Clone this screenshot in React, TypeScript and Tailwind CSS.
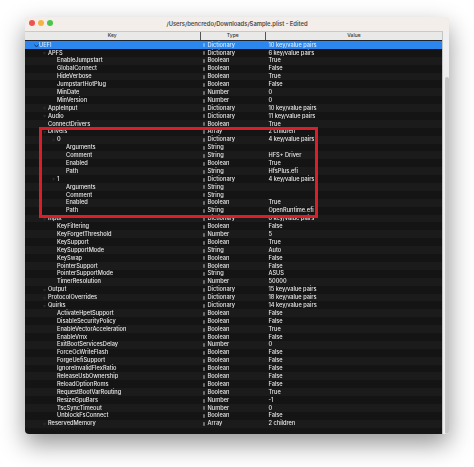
const D = "Dictionary", B = "Boolean", N = "Number", S = "String", A = "Array";
type Row = [string, number, string, string, boolean?];
const rows: Row[] = [
  ["UEFI", 0, D, "10 key/value pairs", true],
  ["APFS", 1, D, "6 key/value pairs", true],
  ["EnableJumpstart", 2, B, "True"],
  ["GlobalConnect", 2, B, "False"],
  ["HideVerbose", 2, B, "True"],
  ["JumpstartHotPlug", 2, B, "False"],
  ["MinDate", 2, N, "0"],
  ["MinVersion", 2, N, "0"],
  ["AppleInput", 1, D, "10 key/value pairs", true],
  ["Audio", 1, D, "11 key/value pairs", true],
  ["ConnectDrivers", 1, B, "True"],
  ["Drivers", 1, A, "2 children", true],
  ["0", 2, D, "4 key/value pairs", true],
  ["Arguments", 3, S, ""],
  ["Comment", 3, S, "HFS+ Driver"],
  ["Enabled", 3, B, "True"],
  ["Path", 3, S, "HfsPlus.efi"],
  ["1", 2, D, "4 key/value pairs", true],
  ["Arguments", 3, S, ""],
  ["Comment", 3, S, ""],
  ["Enabled", 3, B, "True"],
  ["Path", 3, S, "OpenRuntime.efi"],
  ["Input", 1, D, "8 key/value pairs", true],
  ["KeyFiltering", 2, B, "False"],
  ["KeyForgetThreshold", 2, N, "5"],
  ["KeySupport", 2, B, "True"],
  ["KeySupportMode", 2, S, "Auto"],
  ["KeySwap", 2, B, "False"],
  ["PointerSupport", 2, B, "False"],
  ["PointerSupportMode", 2, S, "ASUS"],
  ["TimerResolution", 2, N, "50000"],
  ["Output", 1, D, "15 key/value pairs", true],
  ["ProtocolOverrides", 1, D, "18 key/value pairs", true],
  ["Quirks", 1, D, "14 key/value pairs", true],
  ["ActivateHpetSupport", 2, B, "False"],
  ["DisableSecurityPolicy", 2, B, "False"],
  ["EnableVectorAcceleration", 2, B, "True"],
  ["EnableVmx", 2, B, "False"],
  ["ExitBootServicesDelay", 2, N, "0"],
  ["ForceOcWriteFlash", 2, B, "False"],
  ["ForgeUefiSupport", 2, B, "False"],
  ["IgnoreInvalidFlexRatio", 2, B, "False"],
  ["ReleaseUsbOwnership", 2, B, "False"],
  ["ReloadOptionRoms", 2, B, "False"],
  ["RequestBootVarRouting", 2, B, "True"],
  ["ResizeGpuBars", 2, N, "-1"],
  ["TscSyncTimeout", 2, N, "0"],
  ["UnblockFsConnect", 2, B, "False"],
  ["ReservedMemory", 1, A, "2 children", true],
];

function Updown() {
  return (
    <svg width="2" height="4" viewBox="0 0 4 8" className="shrink-0" fill="currentColor">
      <path d="M2 0 4 3H0zM2 8 0 5h4z" />
    </svg>
  );
}

export default function App() {
  return (
    <div className="h-[467px] w-[474px] overflow-hidden bg-white pl-[25px] pt-[17px] font-['Inter','Liberation_Sans',sans-serif]">
      <div className="relative flex h-[417px] w-[424px] flex-col overflow-hidden rounded-[4px] bg-[#ececec] shadow-[0_10px_24px_rgba(0,0,0,0.42)] blur-[0.3px]">
        <div className="relative flex h-[14px] shrink-0 items-center justify-center bg-[#f4eeea] pt-[1px] text-[5.8px] font-semibold text-[#4a4a4a]">
          <div className="absolute left-[3.5px] top-[2.5px] flex gap-[3px]">
            <span className="h-[6px] w-[6px] rounded-full bg-[#ee544c]" />
            <span className="h-[6px] w-[6px] rounded-full bg-[#f3b53f]" />
            <span className="h-[6px] w-[6px] rounded-full bg-[#4cc44a]" />
          </div>
          /Users/bencredo/Downloads/Sample.plist - Edited
        </div>
        <div className="flex min-h-0 flex-1">
          <div className="flex w-[417px] shrink-0 flex-col bg-[#151515]">
            <div className="flex h-[10px] shrink-0 border-b-[1.5px] border-t border-b-[#1d2430] border-t-[#c9c9c9] bg-[#e9e9e7] text-[5px] font-medium text-[#333]">
              <div className="flex w-[175.5px] items-center justify-center border-r border-[#555]">Key</div>
              <div className="flex w-[65.5px] items-center justify-center border-r border-[#555]">Type</div>
              <div className="flex flex-1 items-center justify-center">Value</div>
            </div>
            <div className="flex flex-col">
              {rows.map((r, i) => {
                const sel = i === 0;
                const bg = sel ? "bg-[#2b86ee] text-[#d8ecff]" : i % 2 === 1 ? "bg-[#141414] text-[#e8e8e8]" : "bg-[#1b1b1b] text-[#e8e8e8]";
                return (
                  <div key={i} className={"flex h-[7.9px] items-center pt-[1px] text-[5.65px] font-medium leading-none " + bg}>
                    <div className="flex w-[175.5px] shrink-0 items-center" style={{ paddingLeft: 14 + r[1] * 9 }}>
                      <span className="relative whitespace-nowrap">
                        {r[4] && (
                          sel ? (
                            <svg width="5" height="4" viewBox="0 0 5 4" className="absolute left-[-5.5px] top-[1px]">
                              <path d="M.5.5 2.5 3 4.5.5" fill="none" stroke="#123a78" strokeWidth="1" />
                            </svg>
                          ) : (
                            <svg width="3" height="3" viewBox="0 0 3 3" className="absolute left-[-5px] top-[1.5px]">
                              <path d="M0 0h3L1.5 3z" fill="#2a2a2a" />
                            </svg>
                          )
                        )}
                        {r[0]}
                      </span>
                    </div>
                    <div className="flex w-[65.5px] shrink-0 items-center gap-[2.5px] pl-[2.5px]">
                      <Updown />
                      <span>{r[2]}</span>
                    </div>
                    <div className="whitespace-nowrap pl-[2.5px]">{r[3]}</div>
                  </div>
                );
              })}
            </div>
          </div>
          <div className="flex flex-1 flex-col border-l border-[#c4c4c4] bg-[#efefef] pl-[2px] pr-[1px] pt-[46px]">
            <div className="w-[3.5px] flex-1 rounded-full bg-[#c6c6c6]" />
          </div>
        </div>
        <div className="pointer-events-none absolute left-[14px] top-[110px] h-[91px] w-[279px] border-[3px] border-[#d91f2a]" />
      </div>
    </div>
  );
}
